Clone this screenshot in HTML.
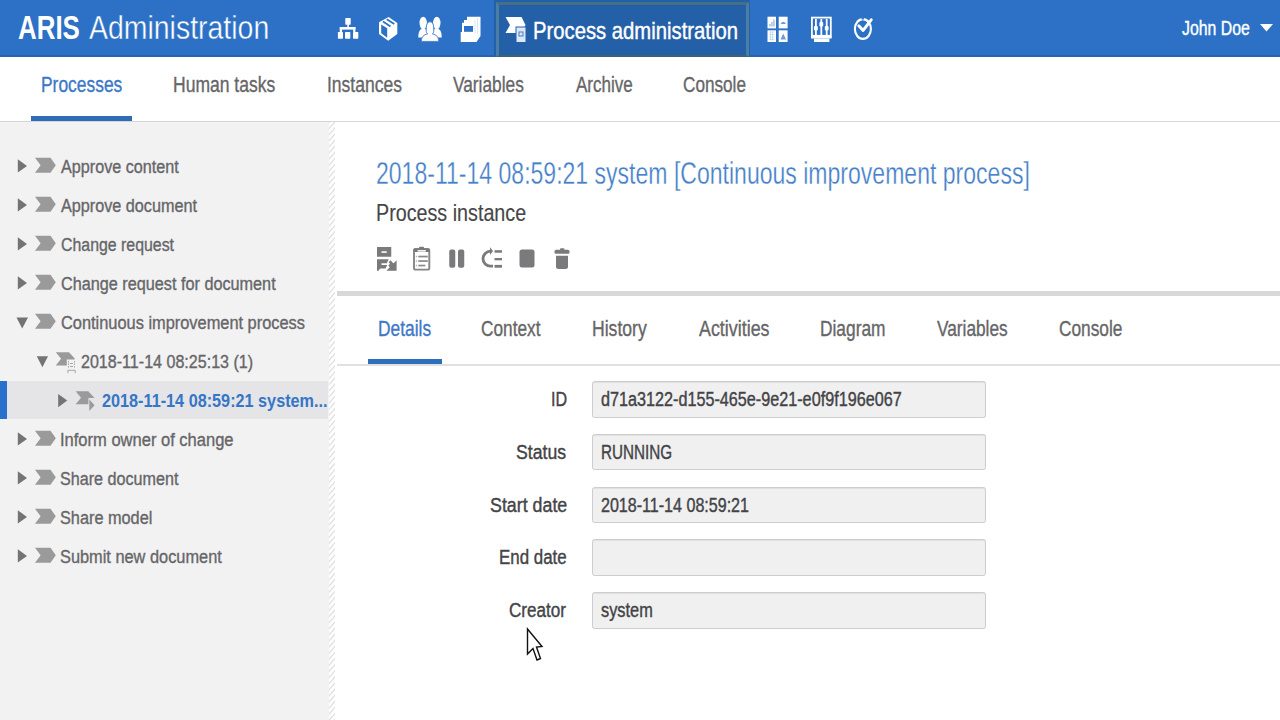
<!DOCTYPE html>
<html><head><meta charset="utf-8">
<style>
html,body{margin:0;padding:0;width:1280px;height:720px;overflow:hidden;background:#fff;font-family:"Liberation Sans",sans-serif;}
.a{position:absolute;}
.t{position:absolute;white-space:nowrap;line-height:1;transform-origin:0 0;font-family:"Liberation Sans",sans-serif;}
svg{position:absolute;overflow:visible;}
</style></head><body>
<!-- header -->
<div class="a" style="left:0;top:0;width:1280px;height:56px;background:#2c71c5;"></div>
<div class="a" style="left:0;top:55px;width:1280px;height:2px;background:#2965ad;"></div>
<!-- active top tab -->
<div class="a" style="left:494px;top:0px;width:256px;height:57px;background:#2460a7;"></div>
<div class="a" style="left:495.5px;top:1.5px;width:253px;height:55.5px;border-style:solid;border-color:#456f86 #4a7ea4 #3c6274 #4a7ea4;border-width:3px 3px 2px 3px;box-sizing:border-box;"></div>

<!-- header icons -->
<svg style="left:0;top:0" width="1280" height="57" viewBox="0 0 1280 57">
 <g fill="#fff">
  <!-- org chart -->
  <rect x="345.3" y="18.1" width="5.4" height="6.6" rx="0.6"/>
  <rect x="347.3" y="24" width="1.6" height="3.5"/>
  <rect x="339.8" y="27" width="15.6" height="2.6"/>
  <rect x="339.8" y="27" width="2.2" height="5"/>
  <rect x="353.2" y="27" width="2.2" height="5"/>
  <rect x="337.9" y="31.9" width="5.1" height="6.8" rx="0.6"/>
  <rect x="345" y="31.9" width="5.3" height="6.8" rx="0.6"/>
  <rect x="353" y="31.9" width="5.3" height="6.8" rx="0.6"/>
 </g>
 <!-- box -->
 <path d="M388.6 17.1 L397.3 23 L397.3 34 L388.2 40.7 L379 34 L379 22.3 Z" fill="#fff"/>
 <path d="M381.2 24.5 L387.2 28.3 L387.2 37.8 L381.2 33.3 Z" fill="#2c71c5"/>
 <path d="M383 21.6 L390.5 26.4 M386.8 19.3 L394.3 24.1" stroke="#2c71c5" stroke-width="1.8" fill="none"/>
 <!-- people -->
 <g fill="#fff">
  <ellipse cx="423.2" cy="23" rx="3.7" ry="6.3"/>
  <path d="M418.3 37.6 C418.3 32 419.8 28.5 423.2 28.5 C426.2 28.5 427.8 31 428.3 33 L426 37.6 Z"/>
  <ellipse cx="436.8" cy="23" rx="3.7" ry="6.3"/>
  <path d="M441.7 37.6 C441.7 32 440.2 28.5 436.8 28.5 C433.8 28.5 432.2 31 431.7 33 L434 37.6 Z"/>
 </g>
 <g fill="#fff" stroke="#4f86cc" stroke-width="1">
  <path d="M421.4 41.4 C421.4 36.8 423.8 34.6 427.6 34 C425.8 32.6 426.2 30.5 426.3 27.5 C426.3 24 427.8 21.8 430 21.8 C432.2 21.8 433.7 24 433.7 27.5 C433.8 30.5 434.2 32.6 432.4 34 C436.2 34.6 438.6 36.8 438.6 41.4 Z"/>
 </g>
 <!-- files -->
 <path d="M467 16.7 L480.5 16.7 L480.5 36 L476.5 42 L460.7 42 L460.7 32 L462 32 L462 22.8 L464 22.8 L464 20 L467 20 Z" fill="#fff"/>
 <rect x="464" y="26" width="9" height="5.8" fill="#2c71c5"/>
 <path d="M475 19.5 L475 33 M477.6 18 L477.6 34" stroke="#c5dbf3" stroke-width="0.7"/>
 <!-- process admin -->
 <g fill="#fff">
  <path d="M505.5 17 L521.5 17 L525.5 25 L521.5 33 L505.5 33 L510 25 Z"/>
 </g>
 <rect x="515.5" y="26.5" width="10" height="15.5" fill="#2460a7"/>
 <rect x="516.5" y="27.5" width="9" height="14.5" fill="#dbe8f8"/>
 <rect x="518.5" y="31.5" width="5" height="5" fill="#4d7bb5"/>
 <rect x="519.5" y="32.5" width="3" height="3" fill="#dbe8f8"/>
 <!-- dashboard -->
 <g fill="#fff">
  <rect x="767.5" y="16.7" width="8.5" height="11.7"/>
  <rect x="778.7" y="16.7" width="8.9" height="11.7"/>
  <rect x="767.5" y="30.3" width="8.5" height="11.7"/>
  <rect x="778.7" y="30.3" width="8.9" height="11.7"/>
 </g>
 <g fill="#6f9bd6">
  <rect x="769.5" y="24" width="0.9" height="2.5"/><rect x="771.5" y="22" width="0.9" height="4.5"/><rect x="773.5" y="19.5" width="0.9" height="7"/>
  <path d="M780.5 24 Q783.2 19.5 786 24 Z"/>
  <path d="M780.5 39.5 L783.2 33.5 L786 39.5 Z"/>
  <path d="M769 32 L774.5 32 M769 34.5 L774.5 34.5 M769 37 L774.5 37 M769 39.5 L774.5 39.5 M770.5 31.5 L770.5 40.5 M772.5 31.5 L772.5 40.5" stroke="#a9c4e8" stroke-width="0.5" fill="none"/>
 </g>
 <!-- monitor -->
 <g>
  <rect x="811" y="16.7" width="20.7" height="20" fill="#fff"/>
  <rect x="812.8" y="18.5" width="17.1" height="16.4" fill="#2c71c5"/>
  <rect x="815" y="19" width="1.8" height="16" fill="#fff"/>
  <rect x="820.4" y="19" width="1.8" height="16" fill="#fff"/>
  <rect x="825.8" y="19" width="1.8" height="16" fill="#fff"/>
  <rect x="814" y="26" width="3.8" height="4.5" rx="1" fill="#fff"/>
  <rect x="819.4" y="22" width="3.8" height="4.5" rx="1" fill="#fff"/>
  <rect x="824.8" y="26" width="3.8" height="4.5" rx="1" fill="#fff"/>
  <rect x="811" y="36" width="20.7" height="2.5" fill="#fff"/>
  <rect x="814" y="38.5" width="15.4" height="3.5" fill="#fff"/>
 </g>
 <!-- check circle -->
 <ellipse cx="862.9" cy="29" rx="8" ry="9.9" fill="none" stroke="#fff" stroke-width="2.1"/>
 <path d="M858.8 25.8 L863.1 30.4 L871.2 19.8" fill="none" stroke="#fff" stroke-width="3" stroke-linecap="round" stroke-linejoin="round"/>
 <rect x="861.5" y="17.5" width="2.5" height="2" fill="#3a78c8"/>
 <!-- dropdown -->
 <path d="M1260 24 L1273 24 L1266.5 31.5 Z" fill="#fff"/>
</svg>

<!-- nav bar -->
<div class="a" style="left:31px;top:115.5px;width:101px;height:5px;background:#2e6cb8;"></div>
<div class="a" style="left:0;top:120.5px;width:1280px;height:1.7px;background:#d6d5d7;"></div>

<!-- left panel -->
<div class="a" style="left:0;top:122px;width:329px;height:598px;background:#f2f2f3;"></div>
<div class="a" style="left:329px;top:122px;width:8px;height:598px;background:#fff;"></div>
<svg style="left:329px;top:122px" width="6" height="598" viewBox="0 0 6 598"><defs><pattern id="hatch" patternUnits="userSpaceOnUse" width="6" height="6.1"><path d="M-0.3 7 L6.3 -0.6 M-0.3 13.1 L6.3 5.5 M-0.3 0.9 L6.3 -6.7" stroke="#dedede" stroke-width="1.3"/></pattern></defs><rect width="6" height="598" fill="url(#hatch)"/></svg>
<!-- selected row -->
<div class="a" style="left:0;top:381px;width:328px;height:38px;background:#e5e5e7;"></div>
<div class="a" style="left:0;top:381px;width:6.5px;height:38px;background:#2a6fcc;"></div>

<!-- tree icons -->
<svg style="left:0;top:0" width="340" height="720" viewBox="0 0 340 720">
 <defs>
  <path id="tri" d="M0 0 L9.2 6.6 L0 13.2 Z" fill="#747476"/>
  <path id="chev" d="M0 0 L15.5 0 L20.8 7.5 L15.5 15 L0 15 L5.6 7.5 Z" fill="#9a9a9b"/>
 </defs>
 <use href="#tri" x="17.8" y="159.3"/><use href="#chev" x="35" y="157.8"/>
 <use href="#tri" x="17.8" y="198.3"/><use href="#chev" x="35" y="196.8"/>
 <use href="#tri" x="17.8" y="237.3"/><use href="#chev" x="35" y="235.8"/>
 <use href="#tri" x="17.8" y="276.3"/><use href="#chev" x="35" y="274.8"/>
 <path d="M16.5 317.5 L28 317.5 L22.2 328.5 Z" fill="#727272"/><use href="#chev" x="35" y="313.8"/>
 <!-- row 6 -->
 <path d="M36.8 356.3 L48 356.3 L42.4 367.3 Z" fill="#747476"/>
 <path d="M55.75 352.3 L69 352.3 L74.7 358.6 L74.7 359.4 L66.8 359.4 L66.8 365.4 L55.75 365.4 L61.1 358.8 Z" fill="#9a9a9b"/>
 <g fill="none" stroke="#a5a5a6" stroke-width="1">
  <path d="M67.9 373.2 V370.3 H75.2 V373.2"/>
  <path d="M68.5 361 V368 M74.5 361 V368" stroke-dasharray="1.5 1"/>
  <path d="M70 363.5 H73 M70 366.5 H73"/>
 </g>
 <!-- row 7 -->
 <path d="M58.2 394 L67.2 400.6 L58.2 407.2 Z" fill="#747476"/>
 <path d="M75.7 391.2 L88.3 391.2 L94.6 398 L88.4 398 L88.4 404.3 L75.7 404.3 L81 397.8 Z" fill="#9a9a9b"/>
 <path d="M89.3 399.4 L94.6 405.2 L89.3 411 Z" fill="#9a9a9b"/>
 <use href="#tri" x="17.8" y="432.3"/><use href="#chev" x="35" y="430.8"/>
 <use href="#tri" x="17.8" y="471.3"/><use href="#chev" x="35" y="469.8"/>
 <use href="#tri" x="17.8" y="510.3"/><use href="#chev" x="35" y="508.8"/>
 <use href="#tri" x="17.8" y="549.3"/><use href="#chev" x="35" y="547.8"/>
</svg>

<!-- toolbar icons -->
<svg style="left:0;top:0" width="600" height="300" viewBox="0 0 600 300">
 <g fill="#7a7a7c">
  <!-- icon1 -->
  <rect x="377" y="247" width="14.25" height="9.75"/>
  <path d="M377 259.25 H388.75 L386.8 263.2 H381.5 V265 H387.3 L385.5 268.5 H380.2 L378.5 270.8 H377 Z"/>
  <path d="M396.6 260.3 V270.8 H386.4 L389.8 267.2 L388.3 265.6 L390.2 263.6 L391.7 265.2 Z"/>
  <path d="M388.6 262.2 L390.5 260.2 L394.3 264.2 L392.4 266.2 Z"/>
 </g>
 <rect x="381.5" y="251.25" width="5.25" height="1.6" fill="#fff"/>
 <!-- clipboard -->
 <rect x="414" y="249.2" width="15.3" height="20.4" rx="1.6" fill="none" stroke="#858587" stroke-width="1.9"/>
 <g fill="#7a7a7c">
  <rect x="413.5" y="248.3" width="16.3" height="3.6" rx="1.2"/>
  <rect x="419" y="246.8" width="5" height="2.5" rx="1"/>
 </g>
 <rect x="417.6" y="250.1" width="8.2" height="1.5" fill="#fff"/>
 <g fill="#8a8a8c">
  <rect x="418.3" y="255.7" width="9.5" height="1.7"/>
  <rect x="418.3" y="260.2" width="9.5" height="1.7"/>
  <rect x="418.3" y="264.7" width="7" height="1.7"/>
  <rect x="415.8" y="255.8" width="1.3" height="1.4" fill="#b0b0b2"/>
  <rect x="415.8" y="260.3" width="1.3" height="1.4" fill="#b0b0b2"/>
  <rect x="415.8" y="264.8" width="1.3" height="1.4" fill="#b0b0b2"/>
 </g>
 <g fill="#7a7a7c">
  <!-- pause -->
  <rect x="449.25" y="249.5" width="6" height="18.25" rx="2"/>
  <rect x="458" y="249.5" width="6.25" height="18.25" rx="2"/>
  <!-- restart list -->
  <rect x="494.5" y="250.2" width="7.5" height="2.5"/>
  <rect x="494.5" y="258" width="7.5" height="2.3"/>
  <rect x="494.5" y="264.9" width="7.5" height="2.8"/>
  <path d="M490 247.2 L493 251.1 L490 255 Z"/>
  <!-- stop -->
  <rect x="519.5" y="249.5" width="15" height="18" rx="2.5"/>
  <!-- trash -->
  <rect x="554.5" y="249.8" width="15" height="4" rx="1.6"/>
  <rect x="560" y="248.2" width="4.5" height="2.5" rx="1.1"/>
  <path d="M556 255.8 H568 V266.5 Q568 269 565.5 269 H558.5 Q556 269 556 266.5 Z"/>
 </g>
 <path d="M490.5 251.2 A7 7 0 0 0 490.5 266.2 L493 266.2" fill="none" stroke="#7a7a7c" stroke-width="2.8"/>
</svg>

<!-- divider -->
<div class="a" style="left:337px;top:291px;width:943px;height:5px;background:#d8d8d8;"></div>
<!-- tabs -->
<div class="a" style="left:368px;top:359px;width:74px;height:5px;background:#2e6fbc;"></div>
<div class="a" style="left:337px;top:364px;width:943px;height:2px;background:#e0e0e0;"></div>

<!-- fields -->
<div class="a" style="left:592.3px;top:381px;width:393.5px;height:36.5px;background:#f0f0f1;border:1.5px solid #cdcdcf;border-radius:2.5px;box-sizing:border-box;box-shadow:inset 0 1px 1px rgba(0,0,0,0.07);"></div>
<div class="a" style="left:592.3px;top:433.75px;width:393.5px;height:36.5px;background:#f0f0f1;border:1.5px solid #cdcdcf;border-radius:2.5px;box-sizing:border-box;box-shadow:inset 0 1px 1px rgba(0,0,0,0.07);"></div>
<div class="a" style="left:592.3px;top:486.5px;width:393.5px;height:36.5px;background:#f0f0f1;border:1.5px solid #cdcdcf;border-radius:2.5px;box-sizing:border-box;box-shadow:inset 0 1px 1px rgba(0,0,0,0.07);"></div>
<div class="a" style="left:592.3px;top:539.25px;width:393.5px;height:36.5px;background:#f0f0f1;border:1.5px solid #cdcdcf;border-radius:2.5px;box-sizing:border-box;box-shadow:inset 0 1px 1px rgba(0,0,0,0.07);"></div>
<div class="a" style="left:592.3px;top:592px;width:393.5px;height:36.5px;background:#f0f0f1;border:1.5px solid #cdcdcf;border-radius:2.5px;box-sizing:border-box;box-shadow:inset 0 1px 1px rgba(0,0,0,0.07);"></div>

<div class='t' style='left:17.74px;top:10.10px;font-size:34px;font-weight:700;color:#fff;transform:scaleX(0.7620);'>ARIS</div>
<div class='t' style='left:88.50px;top:10.10px;font-size:34px;font-weight:300;color:#fff;transform:scaleX(0.8366);-webkit-text-stroke:0.45px #2c71c5;'>Administration</div>
<div class='t' style='left:532.73px;top:20.18px;font-size:23.2px;font-weight:400;color:#fff;transform:scaleX(0.8738);-webkit-text-stroke:0.4px currentColor;'>Process administration</div>
<div class='t' style='left:1181.50px;top:18.77px;font-size:19.8px;font-weight:400;color:#fff;transform:scaleX(0.8012);-webkit-text-stroke:0.4px currentColor;'>John Doe</div>
<div class='t' style='left:41.28px;top:75.09px;font-size:21.3px;font-weight:400;color:#3b78c8;transform:scaleX(0.8173);-webkit-text-stroke:0.35px currentColor;'>Processes</div>
<div class='t' style='left:172.78px;top:75.09px;font-size:21.3px;font-weight:400;color:#666668;transform:scaleX(0.8220);-webkit-text-stroke:0.35px currentColor;'>Human tasks</div>
<div class='t' style='left:326.58px;top:75.09px;font-size:21.3px;font-weight:400;color:#666668;transform:scaleX(0.8222);-webkit-text-stroke:0.35px currentColor;'>Instances</div>
<div class='t' style='left:453.40px;top:75.09px;font-size:21.3px;font-weight:400;color:#666668;transform:scaleX(0.8115);-webkit-text-stroke:0.35px currentColor;'>Variables</div>
<div class='t' style='left:575.50px;top:75.09px;font-size:21.3px;font-weight:400;color:#666668;transform:scaleX(0.8000);-webkit-text-stroke:0.35px currentColor;'>Archive</div>
<div class='t' style='left:683.49px;top:75.09px;font-size:21.3px;font-weight:400;color:#666668;transform:scaleX(0.8052);-webkit-text-stroke:0.35px currentColor;'>Console</div>
<div class='t' style='left:60.90px;top:157.90px;font-size:18px;font-weight:400;color:#666668;transform:scaleX(0.8985);-webkit-text-stroke:0.35px currentColor;'>Approve content</div>
<div class='t' style='left:60.90px;top:196.90px;font-size:18px;font-weight:400;color:#666668;transform:scaleX(0.9000);-webkit-text-stroke:0.35px currentColor;'>Approve document</div>
<div class='t' style='left:60.90px;top:235.90px;font-size:18px;font-weight:400;color:#666668;transform:scaleX(0.8822);-webkit-text-stroke:0.35px currentColor;'>Change request</div>
<div class='t' style='left:60.90px;top:274.90px;font-size:18px;font-weight:400;color:#666668;transform:scaleX(0.9013);-webkit-text-stroke:0.35px currentColor;'>Change request for document</div>
<div class='t' style='left:60.90px;top:313.90px;font-size:18px;font-weight:400;color:#666668;transform:scaleX(0.9097);-webkit-text-stroke:0.35px currentColor;'>Continuous improvement process</div>
<div class='t' style='left:81.30px;top:353.10px;font-size:18px;font-weight:400;color:#666668;transform:scaleX(0.8927);-webkit-text-stroke:0.35px currentColor;'>2018-11-14 08:25:13 (1)</div>
<div class='t' style='left:101.90px;top:392.10px;font-size:18px;font-weight:700;color:#3676c6;transform:scaleX(0.9016);'>2018-11-14 08:59:21 system...</div>
<div class='t' style='left:59.98px;top:430.90px;font-size:18px;font-weight:400;color:#666668;transform:scaleX(0.9176);-webkit-text-stroke:0.35px currentColor;'>Inform owner of change</div>
<div class='t' style='left:60.00px;top:469.90px;font-size:18px;font-weight:400;color:#666668;transform:scaleX(0.8962);-webkit-text-stroke:0.35px currentColor;'>Share document</div>
<div class='t' style='left:59.99px;top:508.90px;font-size:18px;font-weight:400;color:#666668;transform:scaleX(0.9050);-webkit-text-stroke:0.35px currentColor;'>Share model</div>
<div class='t' style='left:59.99px;top:547.90px;font-size:18px;font-weight:400;color:#666668;transform:scaleX(0.9084);-webkit-text-stroke:0.35px currentColor;'>Submit new document</div>
<div class='t' style='left:375.84px;top:158.07px;font-size:30.5px;font-weight:400;color:#4580c8;transform:scaleX(0.7552);-webkit-text-stroke:0.3px #fff;'>2018-11-14 08:59:21 system [Continuous improvement process]</div>
<div class='t' style='left:376.05px;top:201.88px;font-size:23.2px;font-weight:400;color:#464648;transform:scaleX(0.8503);-webkit-text-stroke:0.15px currentColor;'>Process instance</div>
<div class='t' style='left:378.18px;top:318.69px;font-size:21.3px;font-weight:400;color:#4079c6;transform:scaleX(0.8156);-webkit-text-stroke:0.35px currentColor;'>Details</div>
<div class='t' style='left:481.39px;top:318.69px;font-size:21.3px;font-weight:400;color:#666668;transform:scaleX(0.8096);-webkit-text-stroke:0.35px currentColor;'>Context</div>
<div class='t' style='left:592.17px;top:318.69px;font-size:21.3px;font-weight:400;color:#666668;transform:scaleX(0.8258);-webkit-text-stroke:0.35px currentColor;'>History</div>
<div class='t' style='left:699.00px;top:318.69px;font-size:21.3px;font-weight:400;color:#666668;transform:scaleX(0.8393);-webkit-text-stroke:0.35px currentColor;'>Activities</div>
<div class='t' style='left:820.09px;top:318.69px;font-size:21.3px;font-weight:400;color:#666668;transform:scaleX(0.8139);-webkit-text-stroke:0.35px currentColor;'>Diagram</div>
<div class='t' style='left:936.90px;top:318.69px;font-size:21.3px;font-weight:400;color:#666668;transform:scaleX(0.8103);-webkit-text-stroke:0.35px currentColor;'>Variables</div>
<div class='t' style='left:1058.69px;top:318.69px;font-size:21.3px;font-weight:400;color:#666668;transform:scaleX(0.8117);-webkit-text-stroke:0.35px currentColor;'>Console</div>
<div class='t' style='left:550.59px;top:389.20px;font-size:20px;font-weight:400;color:#444446;transform:scaleX(0.8053);-webkit-text-stroke:0.4px currentColor;'>ID</div>
<div class='t' style='left:601.40px;top:389.20px;font-size:20px;font-weight:400;color:#434345;transform:scaleX(0.8094);-webkit-text-stroke:0.4px currentColor;'>d71a3122-d155-465e-9e21-e0f9f196e067</div>
<div class='t' style='left:516.42px;top:441.95px;font-size:20px;font-weight:400;color:#444446;transform:scaleX(0.8821);-webkit-text-stroke:0.4px currentColor;'>Status</div>
<div class='t' style='left:600.64px;top:441.95px;font-size:20px;font-weight:400;color:#434345;transform:scaleX(0.7615);-webkit-text-stroke:0.4px currentColor;'>RUNNING</div>
<div class='t' style='left:490.11px;top:494.70px;font-size:20px;font-weight:400;color:#444446;transform:scaleX(0.8906);-webkit-text-stroke:0.4px currentColor;'>Start date</div>
<div class='t' style='left:601.40px;top:494.70px;font-size:20px;font-weight:400;color:#434345;transform:scaleX(0.8033);-webkit-text-stroke:0.4px currentColor;'>2018-11-14 08:59:21</div>
<div class='t' style='left:499.05px;top:547.45px;font-size:20px;font-weight:400;color:#444446;transform:scaleX(0.8456);-webkit-text-stroke:0.4px currentColor;'>End date</div>
<div class='t' style='left:509.45px;top:600.20px;font-size:20px;font-weight:400;color:#444446;transform:scaleX(0.8545);-webkit-text-stroke:0.4px currentColor;'>Creator</div>
<div class='t' style='left:601.40px;top:600.20px;font-size:20px;font-weight:400;color:#434345;transform:scaleX(0.8175);-webkit-text-stroke:0.4px currentColor;'>system</div>

<!-- cursor -->
<svg style="left:0;top:0" width="1280" height="720" viewBox="0 0 1280 720">
 <path d="M527.5 629 L527.5 654 L533 648.5 L537 660 L540.5 658.5 L536.5 647 L542 646.5 Z" fill="#fff" stroke="#111" stroke-width="1.4" stroke-linejoin="miter"/>
</svg>
</body></html>
